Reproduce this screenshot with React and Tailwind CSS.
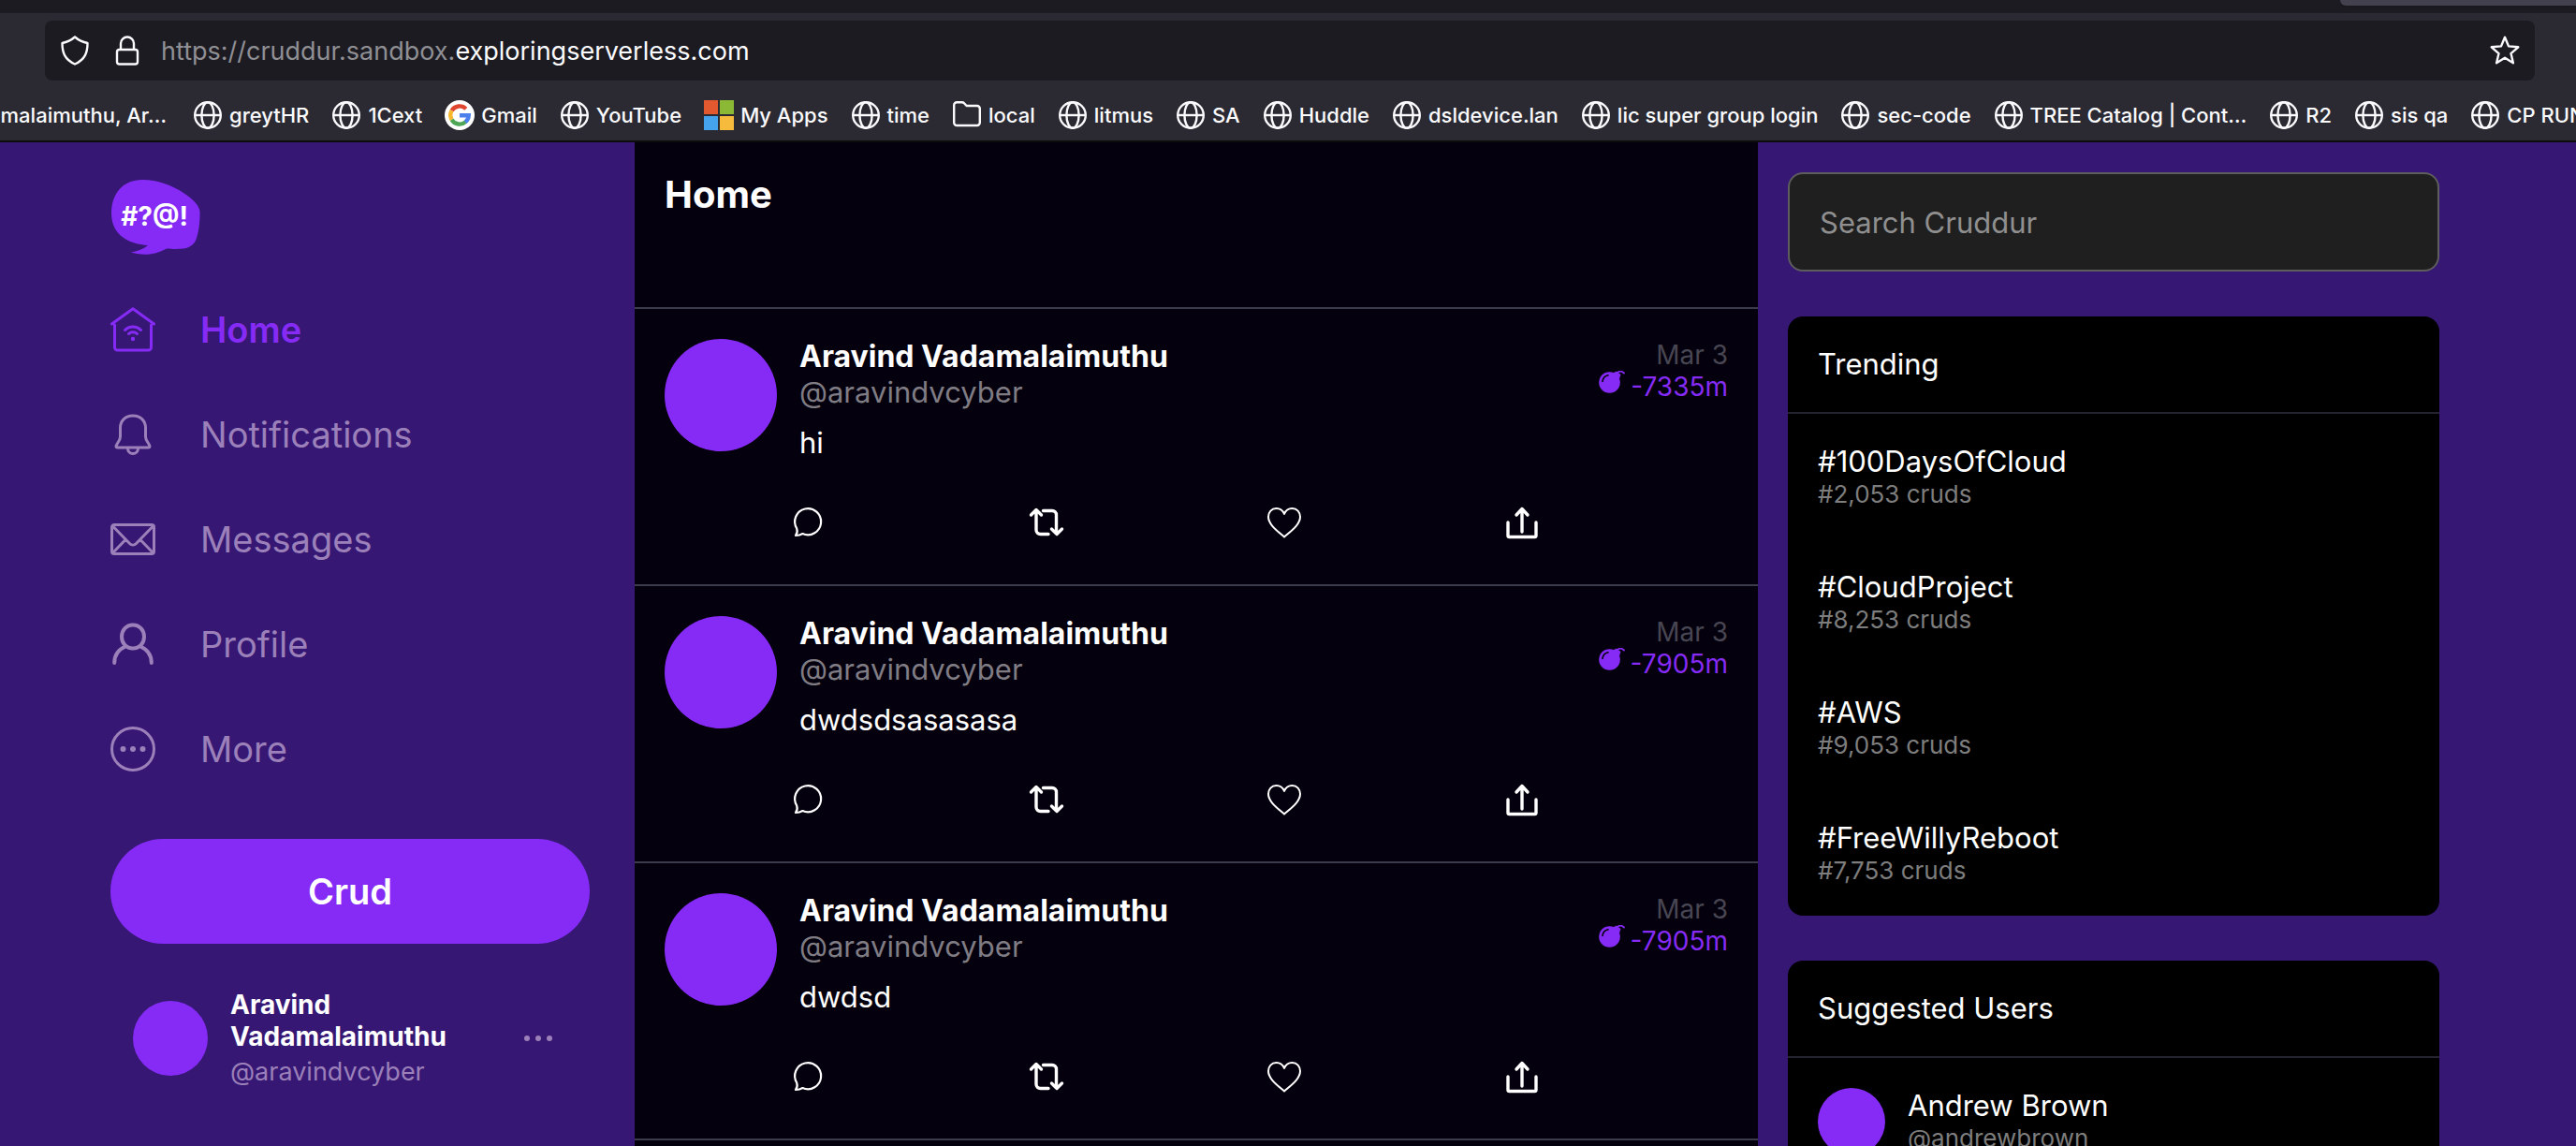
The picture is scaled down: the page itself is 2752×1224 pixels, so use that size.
import React from 'react';

const BOOKMARKS = [
  { label: 'greytHR', icon: 'globe' },
  { label: '1Cext', icon: 'globe' },
  { label: 'Gmail', icon: 'google' },
  { label: 'YouTube', icon: 'globe' },
  { label: 'My Apps', icon: 'microsoft' },
  { label: 'time', icon: 'globe' },
  { label: 'local', icon: 'folder' },
  { label: 'litmus', icon: 'globe' },
  { label: 'SA', icon: 'globe' },
  { label: 'Huddle', icon: 'globe' },
  { label: 'dsldevice.lan', icon: 'globe' },
  { label: 'lic super group login', icon: 'globe' },
  { label: 'sec-code', icon: 'globe' },
  { label: 'TREE Catalog | Cont…', icon: 'globe' },
  { label: 'R2', icon: 'globe' },
  { label: 'sis qa', icon: 'globe' },
  { label: 'CP RUN', icon: 'globe' },
];

const NAV_ITEMS = [
  { label: 'Home', icon: 'home', active: true },
  { label: 'Notifications', icon: 'bell' },
  { label: 'Messages', icon: 'mail' },
  { label: 'Profile', icon: 'profile' },
  { label: 'More', icon: 'more' },
];

const ACTIVITIES = [
  { id: 1, message: 'hi', date: 'Mar 3', expires: '-7335m' },
  { id: 2, message: 'dwdsdsasasasa', date: 'Mar 3', expires: '-7905m' },
  { id: 3, message: 'dwdsd', date: 'Mar 3', expires: '-7905m' },
];

const TRENDINGS = [
  { hashtag: '#100DaysOfCloud', count: '2,053' },
  { hashtag: '#CloudProject', count: '8,253' },
  { hashtag: '#AWS', count: '9,053' },
  { hashtag: '#FreeWillyReboot', count: '7,753' },
];

const BookmarkIcon = ({ name }) => {
  if (name === 'google') {
    return (
      <svg viewBox="0 0 32 32" className="size-8 shrink-0">
        <circle cx="16" cy="16" r="16" fill="#fff" />
        <g fill="none" strokeWidth="4.4">
          <path d="M7.6 11.2A9.7 9.7 0 0 1 22.8 9.2" stroke="#e0452f" />
          <path d="M7.6 20.8A9.7 9.7 0 0 1 7.6 11.2" stroke="#f6b92d" />
          <path d="M22.6 23A9.7 9.7 0 0 1 7.6 20.8" stroke="#4fa657" />
          <path d="M16 16.2h9.7A9.7 9.7 0 0 1 22.2 23.4" stroke="#4a7fec" />
        </g>
      </svg>
    );
  }
  if (name === 'microsoft') {
    return (
      <svg viewBox="0 0 32 32" className="size-8 shrink-0">
        <path fill="#e2592f" d="M0 0h15v15H0z" />
        <path fill="#8bb936" d="M17 0h15v15H17z" />
        <path fill="#45a2ec" d="M0 17h15v15H0z" />
        <path fill="#f6bb3d" d="M17 17h15v15H17z" />
      </svg>
    );
  }
  if (name === 'folder') {
    return (
      <svg viewBox="0 0 32 32" className="size-8 shrink-0" fill="none" stroke="#fbfbfe" strokeWidth="2.4" strokeLinejoin="round">
        <path d="M2.2 24V5.2a3 3 0 0 1 3-3h5.6a3 3 0 0 1 2.2 1l2.6 2.8H26.8a3 3 0 0 1 3 3V24a3 3 0 0 1-3 3H5.2a3 3 0 0 1-3-3z" />
      </svg>
    );
  }
  return (
    <svg viewBox="0 0 32 32" className="size-8 shrink-0" fill="none" stroke="#fbfbfe" strokeWidth="2.4">
      <circle cx="16" cy="16" r="13.8" />
      <ellipse cx="16" cy="16" rx="6.6" ry="13.8" />
      <path d="M2.2 16h27.6" />
    </svg>
  );
};

const NavIcon = ({ name }) => (
  <svg viewBox="0 0 48 48" className="size-12 shrink-0" fill="none" stroke="currentColor" strokeWidth="3" strokeLinecap="round" strokeLinejoin="round">
    {name === 'home' && (
      <>
        <path d="M4.5 19v24a3 3 0 0 0 3 3h33a3 3 0 0 0 3-3V19M1.5 18 24 1.8 46.5 18" />
        <path d="M15.5 24.5a12 12 0 0 1 17 0M19.500 28.500a6.500 6.500 0 0 1 9 0" />
        <circle cx="24" cy="34" r="2.2" fill="currentColor" stroke="none" />
      </>
    )}
    {name === 'bell' && (
      <path d="M24 4c-8 0-13.500 5.500-13.500 13v9.500c0 4-3.500 6.500-4.500 10 0 1 .5 1.500 1.500 1.500h33c1 0 1.500-.5 1.500-1.500-1-3.500-4.500-6-4.500-10V17c0-7.500-5.500-13-13.500-13zM18.500 39a5.500 5.500 0 0 0 11 0" />
    )}
    {name === 'mail' && (
      <path d="M4 8.5h40a2.500 2.500 0 0 1 2.500 2.500v26a2.500 2.500 0 0 1-2.500 2.500H4A2.500 2.500 0 0 1 1.500 37V11A2.500 2.500 0 0 1 4 8.500zM2.500 10l18 18.500a5 5 0 0 0 7 0L45.500 10M2.500 38.500 16 24.500M45.500 38.500 32 24.500" />
    )}
    {name === 'profile' && (
      <path strokeWidth="4" d="M24 3.500c-7 0-12 5.500-12 12.500s5 12.500 12 12.500S36 23 36 16 31 3.500 24 3.500zM16 26.500C9 29.500 4.200 35 4.200 44M32 26.500c7 3 11.800 8.500 11.800 17.500" />
    )}
    {name === 'more' && (
      <>
        <circle cx="24" cy="24" r="22.500" />
        <g fill="currentColor" stroke="none">
          <circle cx="13.500" cy="24" r="3" />
          <circle cx="24" cy="24" r="3" />
          <circle cx="34.500" cy="24" r="3" />
        </g>
      </>
    )}
  </svg>
);

const Logo = () => (
  <svg viewBox="0 0 96 80" className="h-20 w-24">
    <path
      fill="#862bf6"
      d="M34 0C50 0 66 6 78 14c10 7 17 13 17.500 20 .3 12-1.500 24-4.500 31-3 6-9 8.500-16 8.800-6 .3-11 0-15-.4C50 79 38 82 22 77.500c8-1.500 14-4 18-7.500C18 68.500 1 58 1 36 1 14 14 0 34 0z"
    />
    <text x="47" y="49" fill="#fff" textAnchor="middle" fontFamily="Inter, sans-serif" fontWeight="700" fontSize="28">
      #?@!
    </text>
  </svg>
);

const ActionIcon = ({ name }) => (
  <svg viewBox="0 0 40 40" className="size-10" fill="none" stroke="currentColor" strokeLinecap="round" strokeLinejoin="round">
    {name === 'reply' && (
      <path strokeWidth="2.2" d="M6 34c1.500-2 2-5 1.200-7.500A14 14 0 1 1 13.500 32c-2 1.200-5 2-7.500 2z" />
    )}
    {name === 'repost' && (
      <path strokeWidth="3.4" d="M3.500 12 9 6.500l5.500 5.500M9 7.500V28a4.500 4.500 0 0 0 4.500 4.500H22M16.500 7.500h9.500a4.500 4.500 0 0 1 4.500 4.500v20M25.500 27l5.500 5.500 5.500-5.500" />
    )}
    {name === 'like' && (
      <path strokeWidth="2" d="M20 35.500C12 28.500 3 22 3 14c0-5 3.500-9 8.500-9 4 0 7 2.200 8.500 6 1.500-3.800 4.500-6 8.500-6 5 0 8.500 4 8.500 9 0 8-9 14.500-17 21.500z" />
    )}
    {name === 'share' && (
      <path strokeWidth="3.4" d="M5 20v14a1.500 1.500 0 0 0 1.500 1.500h27A1.500 1.500 0 0 0 35 34V20M20 30V5.500M14 12l6-6.500 6 6.500" />
    )}
  </svg>
);

const BombIcon = () => (
  <svg viewBox="0 0 28 24" className="h-6 w-7 shrink-0">
    <circle cx="11.500" cy="12.500" r="11.300" fill="currentColor" />
    <path fill="currentColor" d="M15 2.500 19 .5l4.500 3.500-2 6z" />
    <path d="M20 2c2.500-2 5-1.500 7 .5" fill="none" stroke="currentColor" strokeWidth="1.800" strokeLinecap="round" />
    <path d="M4 11.500c.3-3.500 2.700-6 6-6.800" fill="none" stroke="#05000d" strokeWidth="1.600" strokeLinecap="round" />
  </svg>
);

const BrowserBar = () => (
  <header className="overflow-hidden border-b-2 border-[#0c0c0d] bg-[#2b2a33] text-[#fbfbfe]">
    <div className="flex h-[14px] justify-end bg-[#1c1b22]">
      <div className="h-[6px] w-[252px] rounded-bl-lg bg-[#42414d] shadow" />
    </div>
    <div className="mt-2 mr-11 ml-12 flex h-16 items-center rounded-lg bg-[#1c1b22] px-4">
      <svg viewBox="0 0 32 32" className="size-8" fill="none" stroke="currentColor" strokeWidth="2.4" strokeLinejoin="round">
        <path d="M16 1.500c4 3.500 8 5.500 13.500 6.500 0 10-2.500 17.500-13.500 22.500C5 25.500 2.500 18 2.500 8 8 7 12 5 16 1.500z" />
      </svg>
      <svg viewBox="0 0 32 32" className="ml-6 size-8" fill="none" stroke="currentColor" strokeWidth="2.4">
        <rect x="5" y="15" width="22" height="15.500" rx="2.500" />
        <path d="M9 15V8.500a7 7 0 0 1 14 0V15" />
      </svg>
      <div role="textbox" aria-label="Address" className="ml-5 flex-1 pt-[2px] text-[27px] leading-8 text-[#8f8f94]">
        https://cruddur.sandbox.<span className="text-[#fbfbfe]">exploringserverless.com</span>
      </div>
      <button type="button" aria-label="Bookmark this page">
        <svg viewBox="0 0 32 32" className="size-8" fill="none" stroke="currentColor" strokeWidth="2.4" strokeLinejoin="round">
          <path d="M16 1.800l4 9.600 10.300.9-7.800 6.800 2.400 10.200L16 23.800l-8.900 5.500 2.400-10.200-7.800-6.800 10.300-.9z" />
        </svg>
      </button>
    </div>
    <nav className="flex h-16 items-center gap-6 pt-[10px] text-[22px] leading-8 font-medium whitespace-nowrap">
      <div className="flex w-[182px] shrink-0 justify-end overflow-hidden pr-1">
        <a href="#">Vadamalaimuthu, Ar…</a>
      </div>
      {BOOKMARKS.map((b) => (
        <a key={b.label} href="#" className="flex shrink-0 items-center gap-[7px]">
          <BookmarkIcon name={b.icon} />
          {b.label}
        </a>
      ))}
    </nav>
  </header>
);

const Sidebar = () => (
  <aside className="flex flex-col pt-10 pr-12 pl-[118px]">
    <Logo />
    <nav className="mt-6">
      {NAV_ITEMS.map((item) => (
        <a
          key={item.label}
          href="#"
          className={
            item.active
              ? 'flex h-28 items-center gap-12 text-[38px] leading-[48px] font-semibold text-[#862bf6]'
              : 'flex h-28 items-center gap-12 text-[38px] leading-[48px] text-[#9b80b9]'
          }
        >
          <NavIcon name={item.icon} />
          {item.label}
        </a>
      ))}
    </nav>
    <button type="button" className="mt-10 h-28 shrink-0 rounded-full bg-[#862bf6] text-[38px] leading-[48px] font-semibold text-white">
      Crud
    </button>
    <div className="mt-12 flex items-center px-6">
      <div className="size-20 shrink-0 rounded-full bg-[#862bf6]" />
      <div className="ml-6 flex-1">
        <div className="w-60 text-[28px] leading-[34px] font-bold text-white">Aravind Vadamalaimuthu</div>
        <div className="mt-1 text-[27px] leading-[34px] text-[#9b80b9]">@aravindvcyber</div>
      </div>
      <button type="button" aria-label="Account menu" className="mr-4 flex gap-[6px]">
        <span className="size-[6px] rounded-full bg-[#9b80b9]" />
        <span className="size-[6px] rounded-full bg-[#9b80b9]" />
        <span className="size-[6px] rounded-full bg-[#9b80b9]" />
      </button>
    </div>
  </aside>
);

const Activity = ({ activity }) => (
  <article className="border-b-2 border-[#3c3b4c] px-8 pt-8 pb-[46px]">
    <div className="flex">
      <div className="size-[120px] shrink-0 rounded-full bg-[#862bf6]" />
      <div className="ml-6 flex-1 text-[31px] leading-[38px]">
        <div className="text-[32px] font-bold text-white">Aravind Vadamalaimuthu</div>
        <div className="text-[#7f7c84]">@aravindvcyber</div>
        <p className="mt-4 text-white">{activity.message}</p>
      </div>
      <div className="text-right text-[28px] leading-[34px]">
        <div className="text-[#474652]">{activity.date}</div>
        <div className="flex gap-[6px] text-[#862bf6]">
          <BombIcon />
          {activity.expires}
        </div>
      </div>
    </div>
    <div className="mt-[46px] flex gap-[214px] pl-[134px] text-white">
      <button type="button" aria-label="Reply"><ActionIcon name="reply" /></button>
      <button type="button" aria-label="Repost"><ActionIcon name="repost" /></button>
      <button type="button" aria-label="Like"><ActionIcon name="like" /></button>
      <button type="button" aria-label="Share"><ActionIcon name="share" /></button>
    </div>
  </article>
);

const RightPanel = () => (
  <aside className="flex flex-col gap-12 pt-8 pr-[146px] pl-8 text-[31px] leading-[38px] text-white">
    <input
      type="text"
      aria-label="Search Cruddur"
      placeholder="Search Cruddur"
      className="h-[106px] w-full shrink-0 rounded-2xl border-2 border-[#5d5d5d] bg-[#1f1f1f] px-8 placeholder:text-[#8f8f8f]"
    />
    <section className="rounded-2xl bg-black">
      <h2 className="border-b-2 border-[#23242f] px-8 py-8">Trending</h2>
      {TRENDINGS.map((t) => (
        <a key={t.hashtag} href="#" className="block px-8 py-8">
          <div>{t.hashtag}</div>
          <div className="text-[26px] leading-8 text-[#7d7d7d]">#{t.count} cruds</div>
        </a>
      ))}
    </section>
    <section className="rounded-2xl bg-black">
      <h2 className="border-b-2 border-[#23242f] px-8 py-8">Suggested Users</h2>
      <a href="#" className="flex gap-6 px-8 py-8">
        <div className="size-[72px] rounded-full bg-[#862bf6]" />
        <div>
          <div>Andrew Brown</div>
          <div className="text-[26px] leading-8 text-[#7d7d7d]">@andrewbrown</div>
        </div>
      </a>
    </section>
  </aside>
);

export default function App() {
  return (
    <div className="flex h-screen flex-col overflow-hidden bg-[#361774] font-['Inter','Liberation_Sans',sans-serif]">
      <BrowserBar />
      <div className="grid min-h-0 flex-1 grid-cols-[minmax(0,678fr)_minmax(0,1200fr)_minmax(0,874fr)] overflow-hidden">
        <Sidebar />
        <main className="bg-[#05000d]">
          <h1 className="h-[178px] border-b-2 border-[#3c3b4c] px-8 pt-8 text-[40px] leading-[48px] font-bold text-white">Home</h1>
          {ACTIVITIES.map((a) => (
            <Activity key={a.id} activity={a} />
          ))}
        </main>
        <RightPanel />
      </div>
    </div>
  );
}
